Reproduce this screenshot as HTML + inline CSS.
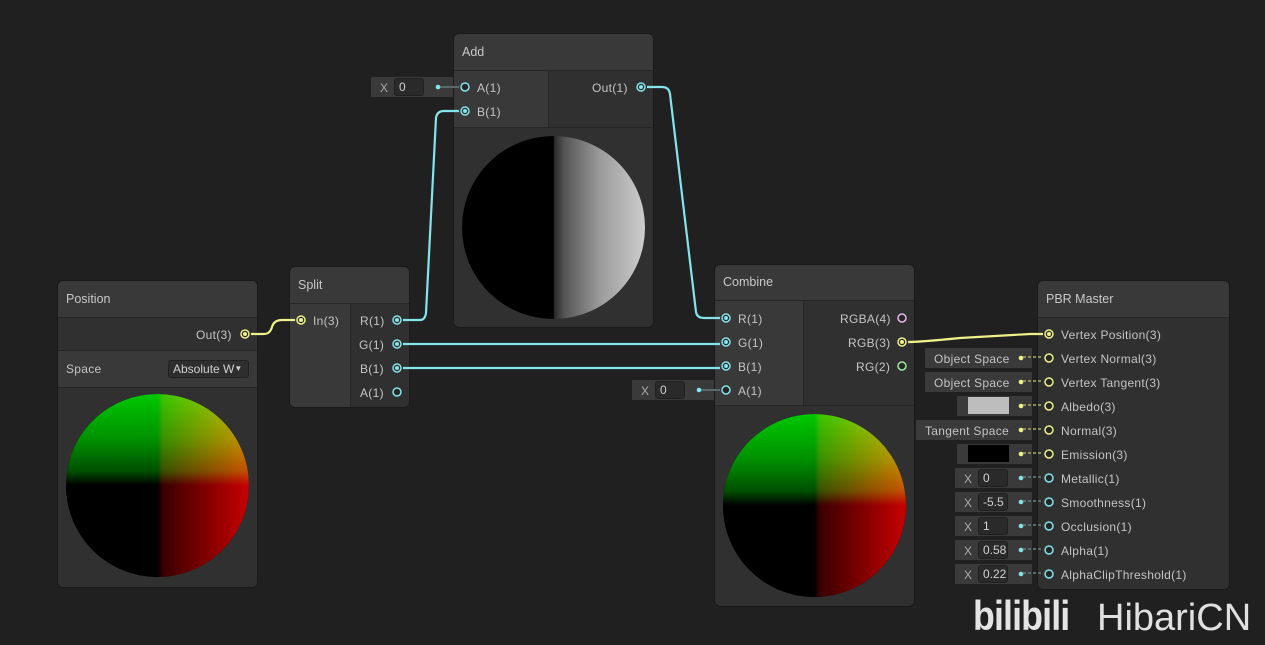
<!DOCTYPE html>
<html><head><meta charset="utf-8"><style>
*{margin:0;padding:0;box-sizing:border-box}
body{width:1265px;height:645px;background:#202020;position:relative;overflow:hidden;font-family:"Liberation Sans","DejaVu Sans",sans-serif;font-size:12px;color:#c4c4c4}
.n{position:absolute;background:#303030;border:1px solid #1a1a1a;border-radius:6px;overflow:hidden}
.h{position:absolute;left:0;right:0;top:0;background:#393939;border-bottom:1px solid #262626;padding-left:8px;font-size:12.5px;color:#c8c8c8}
.a{position:absolute}
.t{position:absolute;white-space:nowrap;line-height:14px;letter-spacing:0.3px}
.c{position:absolute;border-radius:50%;overflow:hidden}
.q{position:absolute;inset:0}
.fld{position:absolute;background:#3a3a3a;height:20px}
.box{position:absolute;background:#2a2a2a;border:1px solid #202020;border-radius:3px;color:#d0d0d0;padding-left:4px;line-height:16px;overflow:hidden;white-space:nowrap}
</style></head><body>

<!-- Position -->
<div class="n" style="left:57px;top:280px;width:201px;height:308px">
 <div class="h" style="height:37px;line-height:36px">Position</div>
 <div class="a" style="left:0;right:0;top:37px;height:33px;background:#303030;border-bottom:1px solid #262626"></div>
 <div class="a" style="left:0;right:0;top:70px;height:37px;background:#393939;border-bottom:1px solid #262626"></div>
 <div class="t" style="left:8px;top:81px">Space</div>
 <div class="a" style="left:110px;top:79px;width:81px;height:18px;background:#2e2e2e;border:1px solid #222;border-radius:3px;padding-left:4px;line-height:16px;color:#d0d0d0">Absolute W<span style="font-size:8px;position:relative;top:-2px">▼</span></div>
</div>
<div class="t" style="left:196px;top:328px">Out(3)</div>

<!-- Split -->
<div class="n" style="left:289px;top:266px;width:121px;height:142px">
 <div class="h" style="height:37px;line-height:36px">Split</div>
 <div class="a" style="left:0;top:37px;width:61px;bottom:0;background:#393939;border-right:1px solid #262626"></div>
</div>
<div class="t" style="left:313px;top:314px">In(3)</div>
<div class="t" style="left:360px;top:314px">R(1)</div>
<div class="t" style="left:359px;top:338px">G(1)</div>
<div class="t" style="left:360px;top:362px">B(1)</div>
<div class="t" style="left:360px;top:386px">A(1)</div>

<!-- Add -->
<div class="n" style="left:453px;top:33px;width:201px;height:295px">
 <div class="h" style="height:37px;line-height:36px">Add</div>
 <div class="a" style="left:0;top:37px;width:95px;height:57px;background:#393939;border-right:1px solid #262626"></div>
 <div class="a" style="left:0;right:0;top:93px;height:1px;background:#262626"></div>
</div>
<div class="c" style="left:462px;top:136px;width:183px;height:183px;background:linear-gradient(to right,#000 50%,#2a2a2a 50.5%,#555 56%,#9a9a9a 75%,#cdcdcd 100%)"></div>
<div class="t" style="left:477px;top:81px">A(1)</div>
<div class="t" style="left:477px;top:105px">B(1)</div>
<div class="t" style="left:592px;top:81px">Out(1)</div>
<div class="fld" style="left:371px;top:77px;width:82px"></div>
<div class="t" style="left:380px;top:81px;color:#aaa">X</div>
<div class="box" style="left:394px;top:78px;width:30px;height:18px">0</div>

<!-- Combine -->
<div class="n" style="left:714px;top:264px;width:201px;height:343px">
 <div class="h" style="height:36px;line-height:35px">Combine</div>
 <div class="a" style="left:0;top:36px;width:89px;height:105px;background:#393939;border-right:1px solid #262626"></div>
 <div class="a" style="left:0;right:0;top:140px;height:1px;background:#262626"></div>
</div>
<div class="t" style="left:738px;top:312px">R(1)</div>
<div class="t" style="left:738px;top:336px">G(1)</div>
<div class="t" style="left:738px;top:360px">B(1)</div>
<div class="t" style="left:738px;top:384px">A(1)</div>
<div class="t" style="left:840px;top:312px">RGBA(4)</div>
<div class="t" style="left:848px;top:336px">RGB(3)</div>
<div class="t" style="left:856px;top:360px">RG(2)</div>
<div class="fld" style="left:632px;top:380px;width:82px"></div>
<div class="t" style="left:641px;top:384px;color:#aaa">X</div>
<div class="box" style="left:655px;top:381px;width:30px;height:18px">0</div>

<!-- PBR Master -->
<div class="n" style="left:1037px;top:280px;width:193px;height:310px">
 <div class="h" style="height:37px;line-height:36px">PBR Master</div>
</div>

<!-- spheres -->
<div class="c" style="left:66px;top:394px;width:183px;height:183px;background:#000">
 <div class="q" style="background:linear-gradient(to bottom,#00c800 0%,#009000 25%,#005000 42%,#000 50%)"></div>
 <div class="q" style="mix-blend-mode:screen;background:linear-gradient(to right,#000 50%,#3a0000 53%,#c80000 100%)"></div>
</div>
<div class="c" style="left:723px;top:414px;width:183px;height:183px;background:#000">
 <div class="q" style="background:linear-gradient(to bottom,#00c800 0%,#009000 25%,#005000 42%,#000 50%)"></div>
 <div class="q" style="mix-blend-mode:screen;background:linear-gradient(to right,#000 50%,#3a0000 53%,#c80000 100%)"></div>
</div>

<!-- PBR rows -->
<div class="t" style="left:1061px;top:328px">Vertex Position(3)</div>
<div class="t" style="left:1061px;top:352px">Vertex Normal(3)</div>
<div class="t" style="left:1061px;top:376px">Vertex Tangent(3)</div>
<div class="t" style="left:1061px;top:400px">Albedo(3)</div>
<div class="t" style="left:1061px;top:424px">Normal(3)</div>
<div class="t" style="left:1061px;top:448px">Emission(3)</div>
<div class="t" style="left:1061px;top:472px">Metallic(1)</div>
<div class="t" style="left:1061px;top:496px">Smoothness(1)</div>
<div class="t" style="left:1061px;top:520px">Occlusion(1)</div>
<div class="t" style="left:1061px;top:544px">Alpha(1)</div>
<div class="t" style="left:1061px;top:568px">AlphaClipThreshold(1)</div>

<div class="fld" style="left:925px;top:348px;width:107px"></div><div class="t" style="left:934px;top:352px">Object Space</div>
<div class="fld" style="left:925px;top:372px;width:107px"></div><div class="t" style="left:934px;top:376px">Object Space</div>
<div class="fld" style="left:957px;top:396px;width:75px"></div><div class="a" style="left:968px;top:397px;width:41px;height:17px;background:#bdbdbd"></div>
<div class="fld" style="left:916px;top:420px;width:116px"></div><div class="t" style="left:925px;top:424px">Tangent Space</div>
<div class="fld" style="left:957px;top:444px;width:75px"></div><div class="a" style="left:968px;top:445px;width:41px;height:17px;background:#000"></div>
<div class="fld" style="left:955px;top:468px;width:77px"></div><div class="t" style="left:964px;top:472px;color:#aaa">X</div><div class="box" style="left:978px;top:469px;width:30px;height:18px">0</div>
<div class="fld" style="left:955px;top:492px;width:77px"></div><div class="t" style="left:964px;top:496px;color:#aaa">X</div><div class="box" style="left:978px;top:493px;width:30px;height:18px">-5.5</div>
<div class="fld" style="left:955px;top:516px;width:77px"></div><div class="t" style="left:964px;top:520px;color:#aaa">X</div><div class="box" style="left:978px;top:517px;width:30px;height:18px">1</div>
<div class="fld" style="left:955px;top:540px;width:77px"></div><div class="t" style="left:964px;top:544px;color:#aaa">X</div><div class="box" style="left:978px;top:541px;width:30px;height:18px">0.58</div>
<div class="fld" style="left:955px;top:564px;width:77px"></div><div class="t" style="left:964px;top:568px;color:#aaa">X</div><div class="box" style="left:978px;top:565px;width:30px;height:18px">0.22</div>

<svg width="1265" height="645" style="position:absolute;left:0;top:0" fill="none">
 <g stroke="#84e4ec" stroke-width="2.2">
  <path d="M403 320 H420 Q425 320 426 313 L436 118 Q437 111 444 111 H459"/>
  <path d="M647 87 H662 Q669 87 670 94 L696 312 Q697 318 704 318 H720"/>
  <path d="M403 344 H720"/>
  <path d="M403 368 H720"/>
 </g>
 <g stroke="#f0f08a" stroke-width="2.2">
  <path d="M251 334 H264 Q270 334 272 327 Q274 320 282 320 H295"/>
  <path d="M908 342 Q920 342 960 338 L1030 334 H1043"/>
 </g>
 <g stroke="#5a6a6c" stroke-width="2">
  <path d="M440 87 H459"/><path d="M701 390 H720"/>
  <path d="M1023 477 H1043 M1023 501 H1043 M1023 525 H1043 M1023 549 H1043 M1023 573 H1043" stroke-dasharray="3 2"/>
 </g>
 <g stroke="#8a8a5a" stroke-width="2" stroke-dasharray="3 2">
  <path d="M1023 357 H1043 M1023 381 H1043 M1023 405 H1043 M1023 429 H1043 M1023 453 H1043"/>
 </g>
 <g stroke-width="1.5" fill="#262626">
  <g stroke="#f0f08a">
   <circle cx="245" cy="334" r="4"/><circle cx="301" cy="320" r="4"/><circle cx="902" cy="342" r="4"/><circle cx="1049" cy="334" r="4"/>
   <circle cx="1049" cy="358" r="4"/><circle cx="1049" cy="382" r="4"/><circle cx="1049" cy="406" r="4"/><circle cx="1049" cy="430" r="4"/><circle cx="1049" cy="454" r="4"/>
  </g>
  <g stroke="#84e4ec">
   <circle cx="397" cy="320" r="4"/><circle cx="397" cy="344" r="4"/><circle cx="397" cy="368" r="4"/><circle cx="397" cy="392" r="4"/>
   <circle cx="465" cy="87" r="4"/><circle cx="465" cy="111" r="4"/><circle cx="641" cy="87" r="4"/>
   <circle cx="726" cy="318" r="4"/><circle cx="726" cy="342" r="4"/><circle cx="726" cy="366" r="4"/><circle cx="726" cy="390" r="4"/>
   <circle cx="1049" cy="478" r="4"/><circle cx="1049" cy="502" r="4"/><circle cx="1049" cy="526" r="4"/><circle cx="1049" cy="550" r="4"/><circle cx="1049" cy="574" r="4"/>
  </g>
  <circle cx="902" cy="318" r="4" stroke="#e8b8e8"/>
  <circle cx="902" cy="366" r="4" stroke="#9ee89e"/>
 </g>
 <g fill="#f0f08a">
  <circle cx="245" cy="334" r="2"/><circle cx="301" cy="320" r="2"/><circle cx="902" cy="342" r="2"/><circle cx="1049" cy="334" r="2"/>
  <circle cx="1021" cy="358" r="2.3"/><circle cx="1021" cy="382" r="2.3"/><circle cx="1021" cy="406" r="2.3"/><circle cx="1021" cy="430" r="2.3"/><circle cx="1021" cy="454" r="2.3"/>
 </g>
 <g fill="#84e4ec">
  <circle cx="397" cy="320" r="2"/><circle cx="397" cy="344" r="2"/><circle cx="397" cy="368" r="2"/>
  <circle cx="465" cy="111" r="2"/><circle cx="641" cy="87" r="2"/>
  <circle cx="726" cy="318" r="2"/><circle cx="726" cy="342" r="2"/><circle cx="726" cy="366" r="2"/>
  <circle cx="438" cy="87" r="2.3"/><circle cx="699" cy="390" r="2.3"/>
  <circle cx="1021" cy="478" r="2.3"/><circle cx="1021" cy="502" r="2.3"/><circle cx="1021" cy="526" r="2.3"/><circle cx="1021" cy="550" r="2.3"/><circle cx="1021" cy="574" r="2.3"/>
 </g>
</svg>

<div class="t" style="left:973px;top:592px;font-size:42px;line-height:48px;color:#e4e4e4;font-weight:bold;letter-spacing:-1px;transform:scaleX(0.85);transform-origin:left">bilibili</div>
<div class="t" style="left:1097px;top:597px;font-size:38px;line-height:42px;color:#e0e0e0;letter-spacing:0">HibariCN</div>
</body></html>
